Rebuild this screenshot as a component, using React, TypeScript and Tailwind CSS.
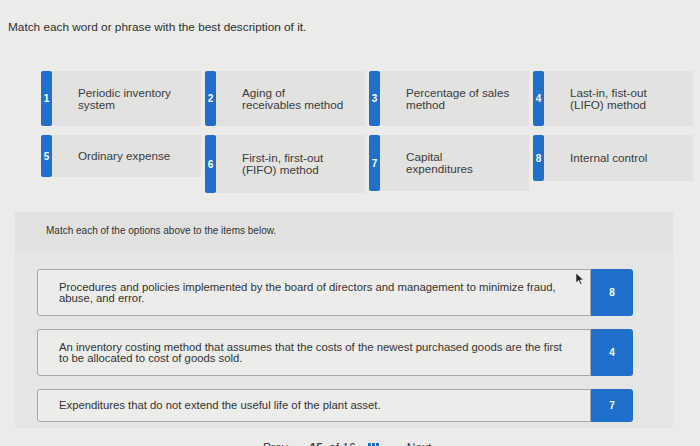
const options = [
  { n: 1, text: ['Periodic inventory', 'system'], h: 'h-[55px]' },
  { n: 2, text: ['Aging of', 'receivables method'], h: 'h-[55px]' },
  { n: 3, text: ['Percentage of sales', 'method'], h: 'h-[55px]' },
  { n: 4, text: ['Last-in, fist-out', '(LIFO) method'], h: 'h-[55px]' },
  { n: 5, text: ['Ordinary expense'], h: 'h-[42px]' },
  { n: 6, text: ['First-in, first-out', '(FIFO) method'], h: 'h-[58px]' },
  { n: 7, text: ['Capital', 'expenditures'], h: 'h-[56px]' },
  { n: 8, text: ['Internal control'], h: 'h-[46px]' },
];

const items = [
  {
    text: 'Procedures and policies implemented by the board of directors and management to minimize fraud, abuse, and error.',
    answer: 8,
    h: 'h-[47px]',
  },
  {
    text: 'An inventory costing method that assumes that the costs of the newest purchased goods are the first to be allocated to cost of goods sold.',
    answer: 4,
    h: 'h-[47px]',
  },
  {
    text: 'Expenditures that do not extend the useful life of the plant asset.',
    answer: 7,
    h: 'h-[33px]',
  },
];

function OptionCard({ n, text, h }: { n: number; text: string[]; h: string }) {
  return (
    <div className={`flex ${h}`}>
      <div className="w-[11px] bg-[#1f6fcb] rounded-[2px] flex items-center justify-center text-white text-[10px] font-bold">
        {n}
      </div>
      <div className="flex-1 bg-[#e2e2e1] flex items-center pl-[26px] text-[11.7px] leading-[12px] text-[#3b3b3b]">
        <div>
          {text.map((t) => (
            <div key={t}>{t}</div>
          ))}
        </div>
      </div>
    </div>
  );
}

export default function App() {
  return (
    <div
      className="relative w-[700px] h-[446px] overflow-hidden bg-[#ebebea]"
      style={{ fontFamily: '"Liberation Sans", Arial, sans-serif' }}
    >
      <p className="pl-[8px] pt-[20px] text-[11.8px] leading-[14px] text-[#2f2f2f]">
        Match each word or phrase with the best description of it.
      </p>

      <div className="ml-[41px] mt-[37px] grid grid-cols-[160px_160px_160px_160px] gap-x-[4px] gap-y-[9px] items-start">
        {options.map((o) => (
          <OptionCard key={o.n} {...o} />
        ))}
      </div>

      <div className="absolute left-[15px] top-[212px] w-[658px] h-[216px] bg-[#e5e5e4]">
        <div className="h-[40px] bg-[#e1e1e0] pl-[31px] pt-[11px] text-[10px] text-[#333]">
          Match each of the options above to the items below.
        </div>
        <div className="mt-[17px] ml-[22px] w-[596px] flex flex-col gap-[13px]">
          {items.map((it) => (
            <div key={it.answer} className={`flex ${it.h}`}>
              <div className="flex-1 border border-[#a8a8a8] rounded-l-[3px] bg-[#ececeb] flex items-center pl-[21px] pr-[24px] text-[11.3px] leading-[11px] text-[#333]">
                {it.text}
              </div>
              <div className="w-[42px] bg-[#1f6fcb] rounded-r-[3px] flex items-center justify-center text-white text-[10px] font-bold">
                {it.answer}
              </div>
            </div>
          ))}
        </div>
      </div>

      {/* cursor */}
      <svg className="absolute left-[576px] top-[273px]" width="8" height="12" viewBox="0 0 8 12">
        <path d="M0 0 L0 10 L2.5 7.5 L4.5 11.5 L6 10.8 L4 7 L7.5 7 Z" fill="#222" stroke="#fff" strokeWidth="0.6" />
      </svg>

      <div className="absolute left-[254px] top-[439px] flex items-center text-[12px] text-[#444]">
        <span className="text-[#1f6fcb] font-bold">‹</span>
        <span className="ml-[5px]">Prev</span>
        <span className="ml-[22px] font-bold">15</span>
        <span className="ml-[6px]">of 16</span>
        <span className="ml-[12px] grid grid-cols-3 gap-[1px]">
          {Array.from({ length: 9 }).map((_, i) => (
            <span key={i} className="w-[3px] h-[3px] bg-[#1f6fcb]" />
          ))}
        </span>
        <span className="ml-[28px]">Next</span>
        <span className="ml-[5px] text-[#1f6fcb] font-bold">›</span>
      </div>
    </div>
  );
}
